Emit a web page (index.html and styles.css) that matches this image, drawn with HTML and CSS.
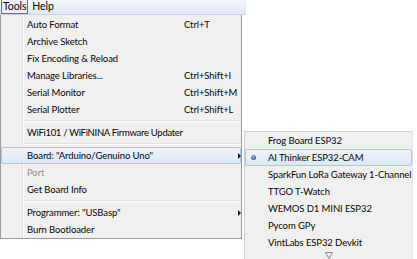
FILE: index.html
```html
<!DOCTYPE html>
<html lang="en">
<head>
    <meta charset="UTF-8">
    <meta name="viewport" content="width=device-width, initial-scale=1.0">
    <title>Tools menu</title>
    <link rel="stylesheet" href="styles.css">
</head>
<body>
    <div class="screen">
        <div class="menubar">
            <span class="bar-item open">Tools</span>
            <span class="bar-item">Help</span>
        </div>

        <div class="menu">
            <div class="item"><span class="label">Auto Format</span><span class="key">Ctrl+T</span></div>
            <div class="item"><span class="label">Archive Sketch</span></div>
            <div class="item"><span class="label">Fix Encoding &amp; Reload</span></div>
            <div class="item"><span class="label">Manage Libraries...</span><span class="key">Ctrl+Shift+I</span></div>
            <div class="item"><span class="label">Serial Monitor</span><span class="key">Ctrl+Shift+M</span></div>
            <div class="item"><span class="label">Serial Plotter</span><span class="key">Ctrl+Shift+L</span></div>
            <div class="sep"></div>
            <div class="item"><span class="label wide">WiFi101 / WiFiNINA Firmware Updater</span></div>
            <div class="sep"></div>
            <div class="item active"><span class="label">Board: "Arduino/Genuino Uno"</span><span class="arrow"></span></div>
            <div class="item disabled"><span class="label">Port</span></div>
            <div class="item"><span class="label">Get Board Info</span></div>
            <div class="sep"></div>
            <div class="item"><span class="label">Programmer: "USBasp"</span><span class="arrow"></span></div>
            <div class="item"><span class="label">Burn Bootloader</span></div>
        </div>

        <div class="submenu">
            <div class="sub-item">Frog Board ESP32</div>
            <div class="sub-item active"><span class="radio"></span>AI Thinker ESP32-CAM</div>
            <div class="sub-item">SparkFun LoRa Gateway 1-Channel</div>
            <div class="sub-item">TTGO T-Watch</div>
            <div class="sub-item">WEMOS D1 MINI ESP32</div>
            <div class="sub-item">Pycom GPy</div>
            <div class="sub-item">VintLabs ESP32 Devkit</div>
            <div class="scroll-down">
                <svg width="8" height="7" viewBox="0 0 8 7"><path d="M0.5 0.5 H7.5 L4 6.5 Z" fill="none" stroke="#8a8a8a" stroke-width="1"/></svg>
            </div>
        </div>
    </div>
</body>
</html>
```

FILE: styles.css
```css
body {
    margin: 0;
    background-color: #ffffff;
    font-family: Lato, "Open Sans", sans-serif;
    font-size: 9.5px;
    letter-spacing: -0.1px;
    color: #050505;
}
.screen {
    position: relative;
    width: 417px;
    height: 259px;
    overflow: hidden;
}
.menubar {
    display: flex;
    align-items: flex-end;
    gap: 2px;
    width: 246px;
    height: 15px;
    padding-left: 1px;
    box-sizing: border-box;
    background: linear-gradient(#f6f8fc, #dfe6f4);
    border-bottom: 1px solid #c9d4ea;
    font-size: 10.5px;
}
.bar-item {
    height: 13px;
    line-height: 12px;
    padding: 0 1px;
    border: 1px solid transparent;
}
.bar-item.open {
    border-color: #707070;
    background-color: #eef1f7;
}
.menu {
    width: 242px;
    box-sizing: border-box;
    border: 1px solid #9a9a9a;
    border-top: none;
    padding-top: 1px;
    background-color: #f0f0f0;
    background-image: linear-gradient(to right, transparent 21px, #e0e0e0 21px, #e0e0e0 22px, #ffffff 22px, #ffffff 23px, transparent 23px);
}
.item {
    display: flex;
    align-items: center;
    height: 17px;
    box-sizing: border-box;
    padding-left: 25px;
    border: 1px solid transparent;
}
.item .label {
    width: 157px;
    white-space: nowrap;
}
.item .label.wide {
    width: auto;
    letter-spacing: -0.3px;
}
.item .key {
    white-space: nowrap;
}
.item .arrow {
    margin-left: auto;
    margin-right: -1px;
    width: 0;
    height: 0;
    border-top: 3px solid transparent;
    border-bottom: 3px solid transparent;
    border-left: 3px solid #1c1c1c;
}
.item.active {
    border: 1px solid #a9c6ec;
    border-radius: 2px;
    background: linear-gradient(#eef4fc, #dce8f8);
}
.item.disabled {
    color: #8e8e8e;
}
.sep {
    height: 6px;
    box-sizing: border-box;
    margin-left: 23px;
    padding-top: 2px;
}
.sep::after {
    content: "";
    display: block;
    border-top: 1px solid #e0e0e0;
    border-bottom: 1px solid #ffffff;
}
.submenu {
    position: absolute;
    left: 244px;
    top: 131px;
    width: 169px;
    height: 130px;
    box-sizing: border-box;
    border: 1px solid #d0d0d0;
    border-right-color: #e4e4e4;
    background-color: #f0f0f0;
    overflow: hidden;
}
.sub-item {
    display: flex;
    align-items: center;
    height: 17px;
    box-sizing: border-box;
    padding-left: 22px;
    border: 1px solid transparent;
    white-space: nowrap;
    position: relative;
}
.sub-item.active {
    border-color: #a9c6ec;
    border-radius: 2px;
    background: linear-gradient(#eef4fc, #dce8f8);
}
.radio {
    position: absolute;
    left: 5px;
    top: 5px;
    width: 5px;
    height: 5px;
    border-radius: 50%;
    background: radial-gradient(circle at 40% 35%, #a9bcd8, #3d5f95 70%);
}
.scroll-down {
    display: flex;
    justify-content: center;
    padding-top: 1px;
}
```
